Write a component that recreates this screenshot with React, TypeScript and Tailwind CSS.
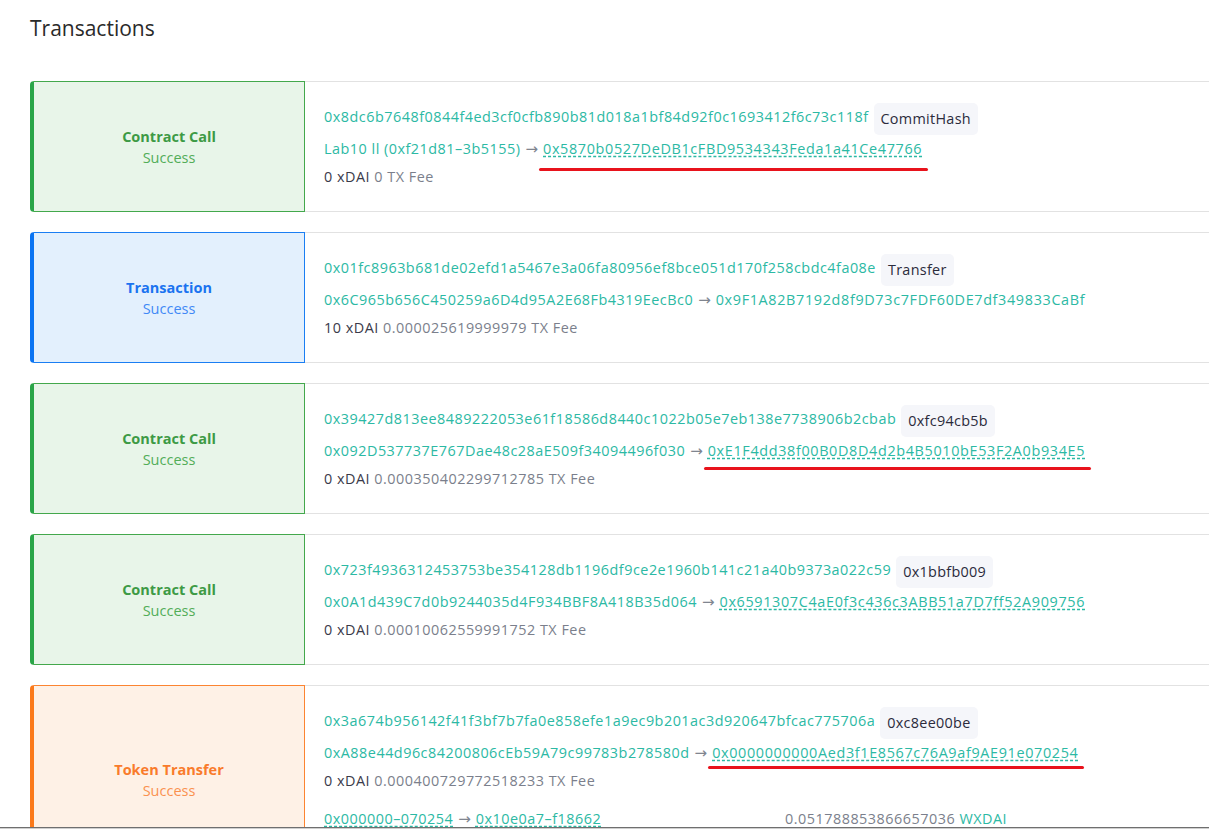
import React from "react";

type Card = {
  type: string;
  theme: "green" | "blue" | "orange";
  hash: string;
  badge: string;
  from: string;
  to: string;
  toLink: boolean;
  red?: string;
  value: string;
  fee: string;
  token?: boolean;
};

const cards: Card[] = [
  {
    type: "Contract Call",
    theme: "green",
    hash: "0x8dc6b7648f0844f4ed3cf0cfb890b81d018a1bf84d92f0c1693412f6c73c118f",
    badge: "CommitHash",
    from: "Lab10 ll (0xf21d81–3b5155)",
    to: "0x5870b0527DeDB1cFBD9534343Feda1a41Ce47766",
    toLink: true,
    red: "top-[calc(100%+9px)]",
    value: "0 xDAI",
    fee: "0",
  },
  {
    type: "Transaction",
    theme: "blue",
    hash: "0x01fc8963b681de02efd1a5467e3a06fa80956ef8bce051d170f258cbdc4fa08e",
    badge: "Transfer",
    from: "0x6C965b656C450259a6D4d95A2E68Fb4319EecBc0",
    to: "0x9F1A82B7192d8f9D73c7FDF60DE7df349833CaBf",
    toLink: false,
    value: "10 xDAI",
    fee: "0.000025619999979",
  },
  {
    type: "Contract Call",
    theme: "green",
    hash: "0x39427d813ee8489222053e61f18586d8440c1022b05e7eb138e7738906b2cbab",
    badge: "0xfc94cb5b",
    from: "0x092D537737E767Dae48c28aE509f34094496f030",
    to: "0xE1F4dd38f00B0D8D4d2b4B5010bE53F2A0b934E5",
    toLink: true,
    red: "top-[calc(100%+6px)]",
    value: "0 xDAI",
    fee: "0.000350402299712785",
  },
  {
    type: "Contract Call",
    theme: "green",
    hash: "0x723f4936312453753be354128db1196df9ce2e1960b141c21a40b9373a022c59",
    badge: "0x1bbfb009",
    from: "0x0A1d439C7d0b9244035d4F934BBF8A418B35d064",
    to: "0x6591307C4aE0f3c436c3ABB51a7D7ff52A909756",
    toLink: true,
    value: "0 xDAI",
    fee: "0.00010062559991752",
  },
  {
    type: "Token Transfer",
    theme: "orange",
    hash: "0x3a674b956142f41f3bf7b7fa0e858efe1a9ec9b201ac3d920647bfcac775706a",
    badge: "0xc8ee00be",
    from: "0xA88e44d96c84200806cEb59A79c99783b278580d",
    to: "0x0000000000Aed3f1E8567c76A9af9AE91e070254",
    toLink: true,
    red: "top-[calc(100%+3px)]",
    value: "0 xDAI",
    fee: "0.000400729772518233",
    token: true,
  },
];

const tileStyles = {
  green: {
    tile: "bg-[#e8f5e9] border-[#43a84c] border-l-[#2aa548]",
    title: "text-[#3d9a45]",
    sub: "text-[#52ad58]",
  },
  blue: {
    tile: "bg-[#e3f0fd] border-[#1a7ef3] border-l-[#0b74f2]",
    title: "text-[#1a73f0]",
    sub: "text-[#4189f6]",
  },
  orange: {
    tile: "bg-[#fef1e6] border-[#fc8431] border-l-[#fb7a1b]",
    title: "text-[#f97b2b]",
    sub: "text-[#fa9150]",
  },
};

function Arrow() {
  return (
    <span
      className="text-[#80858f] mx-[5px] text-[15px] leading-[20px] tracking-normal"
      style={{ fontFamily: '"DejaVu Sans", sans-serif' }}
    >
      →
    </span>
  );
}

function TxCard({ c }: { c: Card }) {
  const s = tileStyles[c.theme];
  return (
    <div className={`flex ${c.token ? "h-[190px]" : "h-[131px]"} w-[1200px] shrink-0`}>
      <div
        className={`w-[275px] shrink-0 flex flex-col items-center justify-center border border-l-4 rounded-l-[4px] ${s.tile}`}
      >
        <div className={`font-bold text-[14.5px] leading-[21px] ${s.title}`}>{c.type}</div>
        <div className={`text-[14.5px] leading-[21px] ${s.sub}`}>Success</div>
      </div>
      <div className="flex-1 border-y border-[#e2e2e2] pl-[19px] pt-[21px] text-[14.4px] tracking-[0.5px]">
        <div className="flex items-center h-[32px]">
          <span className="text-[#2cb9a4] leading-[20px] -mt-[4px]">{c.hash}</span>
          <span className="ml-[5px] h-[32px] px-[7px] flex items-center rounded-[5px] bg-[#f5f6fa] text-[#2b2b3c] tracking-[0.3px]">
            {c.badge}
          </span>
        </div>
        <div className="mt-[4px] leading-[20px] flex items-center">
          <span className="text-[#2cb9a4]">{c.from}</span>
          <Arrow />
          {c.toLink ? (
            <span className="relative text-[#2cb9a4] tracking-[0.65px] underline decoration-dashed decoration-[#2cb9a4] underline-offset-[2px]">
              {c.to}
              {c.red && (
                <span className={`absolute -left-[4px] -right-[6px] h-[3px] rounded-full bg-[#e8131c] ${c.red}`} />
              )}
            </span>
          ) : (
            <span className="text-[#2cb9a4] tracking-[0.65px]">{c.to}</span>
          )}
        </div>
        <div className="mt-[8px] leading-[20px]">
          <span className="text-[#3a3a4a]">{c.value}</span>{" "}
          <span className="text-[#7b7f8c]">{c.fee} TX Fee</span>
        </div>
        {c.token && (
          <div className="mt-[18px] leading-[20px] grid grid-cols-[461px_1fr]">
            <div className="flex items-center">
              <span className="text-[#2cb9a4] underline decoration-dashed underline-offset-[2px]">0x000000–070254</span>
              <Arrow />
              <span className="text-[#2cb9a4] underline decoration-dashed underline-offset-[2px]">0x10e0a7–f18662</span>
            </div>
            <div>
              <span className="text-[#7b7f8c]">0.051788853866657036</span>{" "}
              <span className="text-[#2cb9a4]">WXDAI</span>
            </div>
          </div>
        )}
      </div>
    </div>
  );
}

export default function App() {
  return (
    <div
      className="w-[1209px] h-[829px] overflow-hidden flex flex-col bg-white"
      style={{ fontFamily: '"Open Sans", "Liberation Sans", sans-serif' }}
    >
      <div className="flex-1 min-h-0 overflow-hidden pl-[30px]">
        <h1 className="pt-[14px] text-[21px] leading-[28px] text-[#2a2a2a] font-normal">Transactions</h1>
        <div className="mt-[39px] flex flex-col gap-[20px]">
          {cards.map((c, i) => (
            <TxCard key={i} c={c} />
          ))}
        </div>
      </div>
      <div className="h-[2px] border-t border-[#6f6f6f] bg-[#cfcfcf] shrink-0" />
    </div>
  );
}
